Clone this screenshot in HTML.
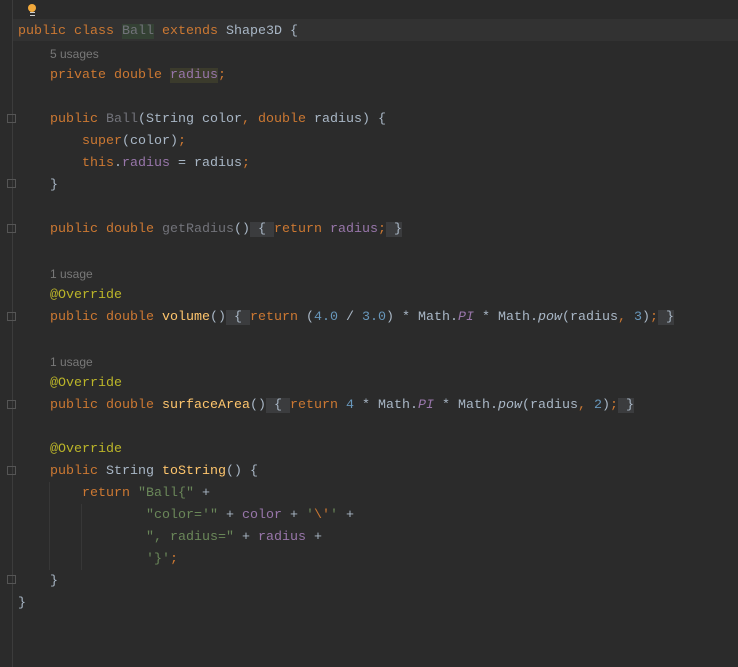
<!DOCTYPE html>
<html><head><style>
html,body{margin:0;padding:0;background:#2b2b2b;width:738px;height:667px;overflow:hidden}
.g{position:absolute;left:12px;top:0;width:1px;height:667px;background:#3c3c3c}
.cur{position:absolute;left:13px;top:19px;width:725px;height:22px;background:#323232}
.code{position:absolute;left:18px;top:21px;margin:0;font-family:"Liberation Mono",monospace;font-size:13.33px;color:#a9b7c6}
.code div{height:22px;line-height:22px;white-space:pre;overflow:hidden}
.k{color:#cc7832}.f{color:#9876aa}.s{color:#6a8759}.n{color:#6897bb}.a{color:#bbb529}.m{color:#ffc66d}.u{color:#72737a}
.i{font-style:italic;color:#9876aa}
.h{color:#787878;font-family:"Liberation Sans",sans-serif;font-size:12px}
.fb{background:#3b3c3e}
.ub{background:#344134}.rb{background:#3b3b2c}
.fold{position:absolute;left:7px;width:9px;height:9px;border:1px solid #555;box-sizing:border-box}
.guide{position:absolute;width:1px;background:#373737}
</style></head><body>
<div class="cur"></div>
<div class="g"></div>
<div style="position:absolute;left:28px;top:4px;width:8px;height:8px;border-radius:50%;background:#f2a93b"></div>
<div style="position:absolute;left:30px;top:12px;width:5px;height:4px;border-top:1px solid #ccc;border-bottom:1px solid #ccc;box-sizing:border-box"></div>
<div class="fold" style="top:114px"></div>
<div class="fold" style="top:179px"></div>
<div class="fold" style="top:224px"></div>
<div class="fold" style="top:312px"></div>
<div class="fold" style="top:400px"></div>
<div class="fold" style="top:466px"></div>
<div class="fold" style="top:575px"></div>
<div class="guide" style="left:49px;top:482px;height:88px"></div>
<div class="guide" style="left:81px;top:504px;height:66px"></div>
<div class="code">
<div><span class="k">public class </span><span class="u ub">Ball</span> <span class="k">extends </span>Shape3D {</div>
<div>    <span class="h">5 usages</span></div>
<div>    <span class="k">private double </span><span class="f rb">radius</span><span class="k">;</span></div>
<div> </div>
<div>    <span class="k">public </span><span class="u">Ball</span>(String color<span class="k">, double </span>radius) {</div>
<div>        <span class="k">super</span>(color)<span class="k">;</span></div>
<div>        <span class="k">this</span>.<span class="f">radius</span> = radius<span class="k">;</span></div>
<div>    }</div>
<div> </div>
<div>    <span class="k">public double </span><span class="u">getRadius</span>()<span class="fb"> { </span><span class="k">return </span><span class="f">radius</span><span class="k">;</span><span class="fb"> }</span></div>
<div> </div>
<div>    <span class="h">1 usage</span></div>
<div>    <span class="a">@Override</span></div>
<div>    <span class="k">public double </span><span class="m">volume</span>()<span class="fb"> { </span><span class="k">return </span>(<span class="n">4.0 </span>/ <span class="n">3.0</span>) * Math.<span class="i">PI</span> * Math.<span style="font-style:italic">pow</span>(radius<span class="k">, </span><span class="n">3</span>)<span class="k">;</span><span class="fb"> }</span></div>
<div> </div>
<div>    <span class="h">1 usage</span></div>
<div>    <span class="a">@Override</span></div>
<div>    <span class="k">public double </span><span class="m">surfaceArea</span>()<span class="fb"> { </span><span class="k">return </span><span class="n">4 </span>* Math.<span class="i">PI</span> * Math.<span style="font-style:italic">pow</span>(radius<span class="k">, </span><span class="n">2</span>)<span class="k">;</span><span class="fb"> }</span></div>
<div> </div>
<div>    <span class="a">@Override</span></div>
<div>    <span class="k">public </span>String <span class="m">toString</span>() {</div>
<div>        <span class="k">return </span><span class="s">"Ball{"</span> +</div>
<div>                <span class="s">"color='"</span> + <span class="f">color</span> + <span class="s">'</span><span class="k">\'</span><span class="s">'</span> +</div>
<div>                <span class="s">", radius="</span> + <span class="f">radius</span> +</div>
<div>                <span class="s">'}'</span><span class="k">;</span></div>
<div>    }</div>
<div>}</div>
</div>
</body></html>
